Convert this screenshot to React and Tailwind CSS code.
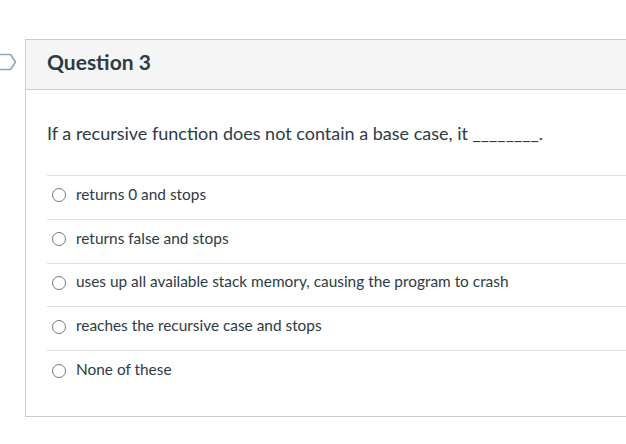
import React from 'react';

const answers = [
  'returns 0 and stops',
  'returns false and stops',
  'uses up all available stack memory, causing the program to crash',
  'reaches the recursive case and stops',
  'None of these',
];

export default function App() {
  return (
    <div className="w-[626px] h-[444px] bg-white overflow-hidden relative" style={{ fontFamily: 'Lato, "Open Sans", sans-serif' }}>
      {/* bookmark flag */}
      <svg className="absolute left-0 top-[53px]" width="18" height="18" viewBox="0 0 18 18">
        <path d="M-2 1.5 H10.5 L15.5 9 L10.5 16.5 H-2" fill="none" stroke="#8ea7bd" strokeWidth="1.6" strokeLinejoin="round" />
      </svg>

      <div className="ml-[25px] mt-[39px] w-[640px] border border-[#c7cdd1] border-r-0">
        <div className="h-[50px] bg-[#f5f5f5] border-b border-[#c7cdd1] flex items-center pl-[21px] pb-[7px]">
          <h2 className="text-[21px] font-bold text-[#2d3b45] leading-none">Question 3</h2>
        </div>
        <div className="pl-[21px] pt-[32px] pb-[22px]">
          <p className="text-[18px] text-[#2d3b45] leading-[22px]">
            If a recursive function does not contain a base case, it ________.
          </p>
          <div className="mt-[31px]">
            {answers.map(a => (
              <div key={a} className="h-[43.8px] border-t border-[#dde0e2] flex items-center pl-[5px] pb-[4px]">
                <span className="w-[14px] h-[14px] rounded-full border border-[#707b84] bg-white shrink-0" />
                <span className="ml-[10px] text-[15.4px] text-[#2d3b45] relative -top-[1px]">{a}</span>
              </div>
            ))}
          </div>
        </div>
      </div>
    </div>
  );
}
